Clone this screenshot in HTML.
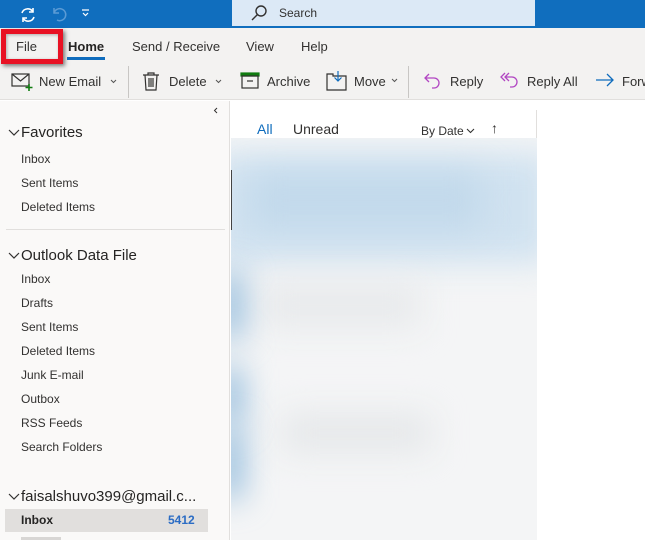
<!DOCTYPE html>
<html><head><style>
*{margin:0;padding:0;box-sizing:border-box}
body{width:645px;height:540px;overflow:hidden;background:#fff;font-family:"Liberation Sans",sans-serif;position:relative;color:#252423}
.a{position:absolute;white-space:nowrap}
.title{left:0;top:0;width:645px;height:28px;background:#106ebe}
.search{left:232px;top:0;width:303px;height:26px;background:#dce9f6}
.ribbon{left:0;top:28px;width:645px;height:72px;background:#f3f2f1;border-bottom:1px solid #e1dfdd}
.tab{font-size:13px;top:39px;color:#323130}
.cmd{font-size:13px;top:74px;color:#323130}
.nav{left:0;top:101px;width:230px;height:439px;background:#faf9f8;border-right:1px solid #e1dfdd}
.f{font-size:12px;left:21px;color:#323130}
.h{font-size:15px;left:21px;color:#252423}
.blur{left:231px;top:138px;width:306px;height:402px;overflow:hidden;background:#f4f5f6}
.b{position:absolute;filter:blur(16px)}
.chev{position:absolute}
</style></head><body>
<div class="a title"></div>
<div class="a search"></div>
<svg class="a" style="left:18px;top:5px" width="20" height="20" viewBox="0 0 20 20" fill="none" stroke="#fff" stroke-width="1.6"><path d="M15 7A6 6 0 0 0 4 8M5 13a6 6 0 0 0 11-1"/><path d="M15 3v4h-4M5 17v-4h4"/></svg>
<svg class="a" style="left:50px;top:5px" width="18" height="18" viewBox="0 0 18 18" fill="none" stroke="#5b9bd5" stroke-width="1.5"><path d="M4 3v5h5M4 8a6 6 0 1 1 3 7"/></svg>
<svg class="a" style="left:81px;top:9px" width="9" height="8" viewBox="0 0 9 8" fill="none" stroke="#fff" stroke-width="1.2"><path d="M1 1h7M2 4l2.5 2.5L7 4"/></svg>
<svg class="a" style="left:250px;top:4px" width="18" height="18" viewBox="0 0 18 18" fill="none" stroke="#323130" stroke-width="1.4"><circle cx="11" cy="7" r="5"/><path d="M7.5 10.5L2 16"/></svg>
<div class="a" style="left:279px;top:6px;font-size:12px;color:#323130">Search</div>
<div class="a ribbon"></div>
<div class="a tab" style="left:16px">File</div>
<div class="a" style="left:1px;top:29px;width:62px;height:35px;border:5px solid #e81123;box-shadow:2px 2px 4px rgba(0,0,0,.5), inset 1px 1px 3px rgba(0,0,0,.3)"></div>
<div class="a tab" style="left:68px;font-weight:bold;color:#252423">Home</div>
<div class="a" style="left:67px;top:57px;width:38px;height:3px;background:#0f6cbd"></div>
<div class="a tab" style="left:132px">Send / Receive</div>
<div class="a tab" style="left:246px">View</div>
<div class="a tab" style="left:301px">Help</div>
<svg class="a" style="left:11px;top:72px" width="22" height="20" viewBox="0 0 22 20" fill="none" stroke="#323130" stroke-width="1.2"><rect x="1" y="2" width="17" height="12"/><path d="M1 2l8.5 7L18 2"/><path d="M18 12v7M14.5 15.5h7" stroke="#107c10" stroke-width="1.6"/></svg>
<div class="a cmd" style="left:39px">New Email</div>
<svg class="a" style="left:110px;top:79px" width="7" height="5" viewBox="0 0 7 5" fill="none" stroke="#555"><path d="M1 1l2.5 2.5L6 1"/></svg>
<div class="a" style="left:128px;top:66px;width:1px;height:32px;background:#c8c6c4"></div>
<svg class="a" style="left:142px;top:71px" width="18" height="20" viewBox="0 0 18 20" fill="none" stroke="#323130" stroke-width="1.2"><path d="M1 4h16M6 4V2h6v2M3 4l1 15h10l1-15M7 7v9M9 7v9M11 7v9"/></svg>
<div class="a cmd" style="left:169px">Delete</div>
<svg class="a" style="left:215px;top:79px" width="7" height="5" viewBox="0 0 7 5" fill="none" stroke="#555"><path d="M1 1l2.5 2.5L6 1"/></svg>
<svg class="a" style="left:240px;top:72px" width="20" height="18" viewBox="0 0 20 18" fill="none" stroke="#323130" stroke-width="1.2"><rect x="1" y="1" width="18" height="3" fill="#107c10" stroke="#107c10"/><rect x="2" y="4" width="16" height="12"/><path d="M7 9h6"/></svg>
<div class="a cmd" style="left:267px">Archive</div>
<svg class="a" style="left:326px;top:70px" width="22" height="22" viewBox="0 0 22 22" fill="none" stroke="#323130" stroke-width="1.2"><path d="M1 4h6v2h13v14H1z"/><path d="M12 1v10M8.5 7.5L12 11l3.5-3.5" stroke="#0f6cbd"/></svg>
<div class="a cmd" style="left:354px">Move</div>
<svg class="a" style="left:391px;top:78px" width="7" height="5" viewBox="0 0 7 5" fill="none" stroke="#555"><path d="M1 1l2.5 2.5L6 1"/></svg>
<div class="a" style="left:408px;top:66px;width:1px;height:32px;background:#c8c6c4"></div>
<svg class="a" style="left:423px;top:71px" width="20" height="20" viewBox="0 0 20 20" fill="none" stroke="#b146c2" stroke-width="1.3"><path d="M6 3L2 7l4 4M2 7h9a5 5 0 0 1 0 10h-2"/></svg>
<div class="a cmd" style="left:450px">Reply</div>
<svg class="a" style="left:499px;top:70px" width="22" height="22" viewBox="0 0 22 22" fill="none" stroke="#b146c2" stroke-width="1.3"><path d="M6 3L2 7l4 4M10 3L6 7l4 4M6 7h7a5 5 0 0 1 0 10h-2"/></svg>
<div class="a cmd" style="left:527px">Reply All</div>
<svg class="a" style="left:595px;top:72px" width="20" height="16" viewBox="0 0 20 16" fill="none" stroke="#0f6cbd" stroke-width="1.3"><path d="M1 8h17M12 2l6 6-6 6"/></svg>
<div class="a cmd" style="left:622px">Forward</div>
<div class="a nav"></div>
<svg class="a" style="left:213px;top:107px" width="5" height="7" viewBox="0 0 5 7" fill="none" stroke="#323130"><path d="M4 1L1.5 3.5 4 6"/></svg>
<svg class="chev" style="left:8px;top:129px" width="12" height="8" viewBox="0 0 12 8" fill="none" stroke="#323130" stroke-width="1.2"><path d="M1 1l5 5 5-5"/></svg>
<div class="a h" style="top:124px">Favorites</div>
<div class="a f" style="top:152px">Inbox</div>
<div class="a f" style="top:176px">Sent Items</div>
<div class="a f" style="top:200px">Deleted Items</div>
<div class="a" style="left:6px;top:229px;width:219px;height:1px;background:#e1dfdd"></div>
<svg class="chev" style="left:8px;top:252px" width="12" height="8" viewBox="0 0 12 8" fill="none" stroke="#323130" stroke-width="1.2"><path d="M1 1l5 5 5-5"/></svg>
<div class="a h" style="top:247px">Outlook Data File</div>
<div class="a f" style="top:272px">Inbox</div>
<div class="a f" style="top:296px">Drafts</div>
<div class="a f" style="top:320px">Sent Items</div>
<div class="a f" style="top:344px">Deleted Items</div>
<div class="a f" style="top:368px">Junk E-mail</div>
<div class="a f" style="top:392px">Outbox</div>
<div class="a f" style="top:416px">RSS Feeds</div>
<div class="a f" style="top:440px">Search Folders</div>
<svg class="chev" style="left:8px;top:493px" width="12" height="8" viewBox="0 0 12 8" fill="none" stroke="#323130" stroke-width="1.2"><path d="M1 1l5 5 5-5"/></svg>
<div class="a h" style="top:488px">faisalshuvo399@gmail.c...</div>
<div class="a" style="left:5px;top:509px;width:203px;height:23px;background:#e1dfdd"></div>
<div class="a f" style="top:513px;font-weight:bold;color:#252423">Inbox</div>
<div class="a" style="left:168px;top:513px;font-size:12px;font-weight:bold;color:#2b6cc4">5412</div>
<div class="a" style="left:21px;top:537px;width:40px;height:3px;background:#d8d6d4"></div>
<div class="a" style="left:257px;top:121px;font-size:14px;color:#0f6cbd">All</div>
<div class="a" style="left:293px;top:121px;font-size:14px;color:#323130">Unread</div>
<div class="a" style="left:421px;top:124px;font-size:12px;color:#323130">By Date</div>
<svg class="a" style="left:466px;top:128px" width="9" height="6" viewBox="0 0 9 6" fill="none" stroke="#323130" stroke-width="1.1"><path d="M1 1l3.5 3.5L8 1"/></svg>
<div class="a" style="left:491px;top:120px;font-size:14px;color:#323130">&#8593;</div>
<div class="a" style="left:536px;top:110px;width:1px;height:430px;background:#e1dfdd"></div>
<div class="a blur">
<div class="b" style="left:-20px;top:15px;width:340px;height:110px;background:#d0e2f0"></div>
<div class="b" style="left:20px;top:35px;width:230px;height:55px;background:#c2d9eb"></div>
<div class="b" style="left:30px;top:145px;width:160px;height:45px;background:#e8eaec"></div>
<div class="b" style="left:50px;top:275px;width:150px;height:40px;background:#e6e8ea"></div>
<div class="b" style="left:-12px;top:135px;width:22px;height:65px;background:#7fb0d8"></div>
<div class="b" style="left:-12px;top:230px;width:22px;height:55px;background:#7fb0d8"></div>
<div class="b" style="left:-12px;top:290px;width:22px;height:70px;background:#7fb0d8"></div>
</div>
<div class="a" style="left:231px;top:170px;width:1px;height:60px;background:#444"></div>
</body></html>
